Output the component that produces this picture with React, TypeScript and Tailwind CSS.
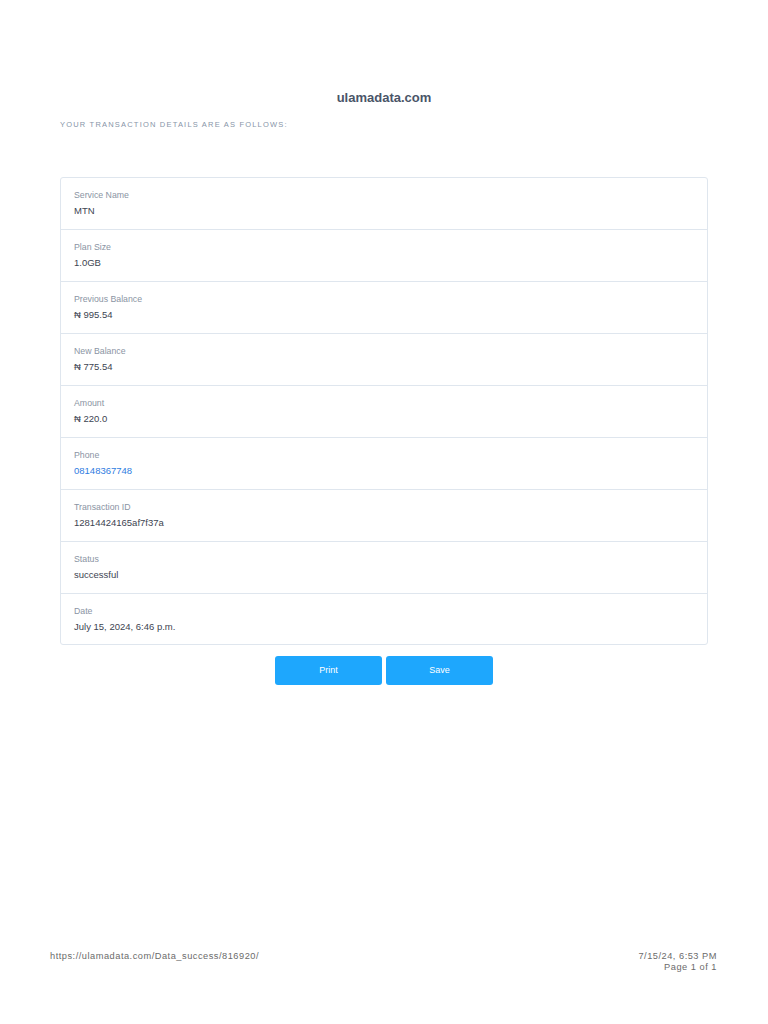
import React from "react";

const rows: { label: string; value: string; link?: boolean }[] = [
  { label: "Service Name", value: "MTN" },
  { label: "Plan Size", value: "1.0GB" },
  { label: "Previous Balance", value: "₦ 995.54" },
  { label: "New Balance", value: "₦ 775.54" },
  { label: "Amount", value: "₦ 220.0" },
  { label: "Phone", value: "08148367748", link: true },
  { label: "Transaction ID", value: "12814424165af7f37a" },
  { label: "Status", value: "successful" },
  { label: "Date", value: "July 15, 2024, 6:46 p.m." },
];

const App: React.FC = () => {
  return (
    <div
      className="min-h-[1024px] w-[768px] bg-white flex flex-col"
      style={{ fontFamily: '"Liberation Sans", Arial, sans-serif' }}
    >
      {/* Header */}
      <div className="px-[60px] pt-[90px]">
        <h1 className="text-center text-[13px] leading-[16px] font-bold text-[#4a5568]">
          ulamadata.com
        </h1>
        <p className="mt-[14px] text-[7.5px] leading-[10px] tracking-[0.16em] uppercase text-[#8795a8]">
          Your transaction details are as follows:
        </p>

        {/* Details */}
        <div className="mt-[47px] border border-[#dfe6ee] rounded-[3px] divide-y divide-[#dfe6ee]">
          {rows.map((row, i) => (
            <div
              key={row.label}
              className={`px-[13px] pt-[12px] ${i === rows.length - 1 ? "pb-[11px]" : "pb-[12px]"}`}
            >
              <div className="text-[8.75px] leading-[11px] text-[#8a94a3]">{row.label}</div>
              <div
                className={`mt-[4px] text-[9.5px] leading-[12px] ${
                  row.link ? "text-[#2f7de1]" : "text-[#3d4451]"
                }`}
              >
                {row.value}
              </div>
            </div>
          ))}
        </div>

        {/* Buttons */}
        <div className="mt-[11px] flex justify-center gap-[4px]">
          <button className="w-[107px] h-[29px] rounded-[3px] bg-[#1ea7fd] text-white text-[9px]">
            Print
          </button>
          <button className="w-[107px] h-[29px] rounded-[3px] bg-[#1ea7fd] text-white text-[9px]">
            Save
          </button>
        </div>
      </div>

      {/* Footer */}
      <div className="mt-auto flex justify-between items-start pl-[50px] pr-[51px] pb-[51px] text-[9.25px] leading-[11px] text-[#6b6b6b] tracking-[0.055em]">
        <div>https://ulamadata.com/Data_success/816920/</div>
        <div className="text-right">
          <div>7/15/24, 6:53 PM</div>
          <div>Page 1 of 1</div>
        </div>
      </div>
    </div>
  );
};

export default App;
